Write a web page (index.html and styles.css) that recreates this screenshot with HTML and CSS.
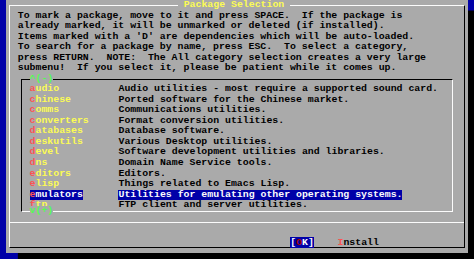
FILE: index.html
```html
<!DOCTYPE html>
<html lang="en">
<head>
    <meta charset="UTF-8">
    <title>Package Selection</title>
    <link rel="stylesheet" href="styles.css">
</head>
<body>
    <div class="screen">
        <div class="dialog">
            <div class="title"> Package Selection </div>
            <div class="frame">
                <div class="prompt">To mark a package, move to it and press SPACE.  If the package is
already marked, it will be unmarked or deleted (if installed).
Items marked with a 'D' are dependencies which will be auto-loaded.
To search for a package by name, press ESC.  To select a category,
press RETURN.  NOTE:  The All category selection creates a very large
submenu!  If you select it, please be patient while it comes up.</div>
                <div class="menu">
                    <span class="arrow arrow-up">^(-)</span>
                    <div class="item"><span class="tag"><b>a</b>udio</span><span class="desc">Audio utilities - most require a supported sound card.</span></div>
                    <div class="item"><span class="tag"><b>c</b>hinese</span><span class="desc">Ported software for the Chinese market.</span></div>
                    <div class="item"><span class="tag"><b>c</b>omms</span><span class="desc">Communications utilities.</span></div>
                    <div class="item"><span class="tag"><b>c</b>onverters</span><span class="desc">Format conversion utilities.</span></div>
                    <div class="item"><span class="tag"><b>d</b>atabases</span><span class="desc">Database software.</span></div>
                    <div class="item"><span class="tag"><b>d</b>eskutils</span><span class="desc">Various Desktop utilities.</span></div>
                    <div class="item"><span class="tag"><b>d</b>evel</span><span class="desc">Software development utilities and libraries.</span></div>
                    <div class="item"><span class="tag"><b>d</b>ns</span><span class="desc">Domain Name Service tools.</span></div>
                    <div class="item"><span class="tag"><b>e</b>ditors</span><span class="desc">Editors.</span></div>
                    <div class="item"><span class="tag"><b>e</b>lisp</span><span class="desc">Things related to Emacs Lisp.</span></div>
                    <div class="item selected"><span class="tag"><b>e</b>mulators</span><span class="desc">Utilities for emulating other operating systems.</span></div>
                    <div class="item"><span class="tag"><b>f</b>tp</span><span class="desc">FTP client and server utilities.</span></div>
                    <span class="arrow arrow-down">v(+)</span>
                </div>
                <div class="separator"></div>
                <div class="buttons">
                    <span class="btn active">[<b>O</b>K]</span><span class="btn"> <b>I</b>nstall </span>
                </div>
            </div>
        </div>
    </div>
</body>
</html>
```

FILE: styles.css
```css
:root {
    --cw: 5.925px;
    --rh: 10.533px;
    --blue: #0000a8;
    --gray: #aaaaaa;
    --white: #fcfcfc;
    --yellow: #fcfc54;
    --red: #fc5454;
    --green: #54fc54;
}

* {
    margin: 0;
    padding: 0;
    box-sizing: border-box;
}

body {
    background-color: var(--blue);
    color: #000;
    font-family: "Liberation Mono", "DejaVu Sans Mono", monospace;
    font-size: 9.875px;
    font-weight: bold;
    line-height: var(--rh);
}

b {
    font-weight: bold;
}

.screen {
    width: 474px;
    height: 259px;
    overflow: hidden;
    background-color: var(--blue);
}

.dialog {
    position: relative;
    width: calc(78 * var(--cw));
    height: calc(24 * var(--rh));
    margin-left: var(--cw);
    padding: calc(0.5 * var(--rh)) calc(0.5 * var(--cw));
    background-color: var(--gray);
    box-shadow: calc(2 * var(--cw)) var(--rh) 0 #000;
}

.title {
    position: absolute;
    top: 0;
    left: calc(29 * var(--cw));
    white-space: pre;
    color: var(--yellow);
    background-color: var(--gray);
}

.frame {
    height: 100%;
    display: flex;
    flex-direction: column;
    border: 1px solid;
    border-color: var(--white) #000 #000 var(--white);
}

.prompt {
    height: calc(6 * var(--rh));
    margin: calc(0.5 * var(--rh) - 1px) 0 0 calc(1.5 * var(--cw) - 1px);
    white-space: pre;
}

.menu {
    position: relative;
    width: calc(73 * var(--cw));
    height: calc(13 * var(--rh));
    margin: calc(0.5 * var(--rh)) 0 0 calc(2 * var(--cw) - 1px);
    padding: calc(0.5 * var(--rh) - 1px) 0 0 calc(1.5 * var(--cw) - 1px);
    border: 1px solid;
    border-color: #000 var(--white) var(--white) #000;
}

.arrow {
    position: absolute;
    left: calc(1.5 * var(--cw) - 1px);
    color: var(--green);
    background-color: var(--gray);
}

.arrow-up {
    top: calc(-0.5 * var(--rh) - 1px);
}

.arrow-down {
    bottom: calc(-0.5 * var(--rh) - 1px);
}

.item {
    display: grid;
    grid-template-columns: calc(15 * var(--cw)) max-content;
    justify-items: start;
    white-space: pre;
}

.tag {
    color: var(--yellow);
}

.tag b, .btn b {
    color: var(--red);
}

.item.selected .tag, .item.selected .desc {
    background-color: var(--blue);
    color: var(--white);
}

.separator {
    margin-top: var(--rh);
    border-top: 1px solid var(--white);
}

.buttons {
    margin-top: calc(0.5 * var(--rh) - 1px);
    padding-left: calc(27.5 * var(--cw) - 1px);
    white-space: pre;
}

.btn + .btn {
    margin-left: calc(3 * var(--cw));
}

.btn.active {
    background-color: var(--blue);
    color: var(--white);
}

.btn.active b {
    color: #a80000;
}
```
